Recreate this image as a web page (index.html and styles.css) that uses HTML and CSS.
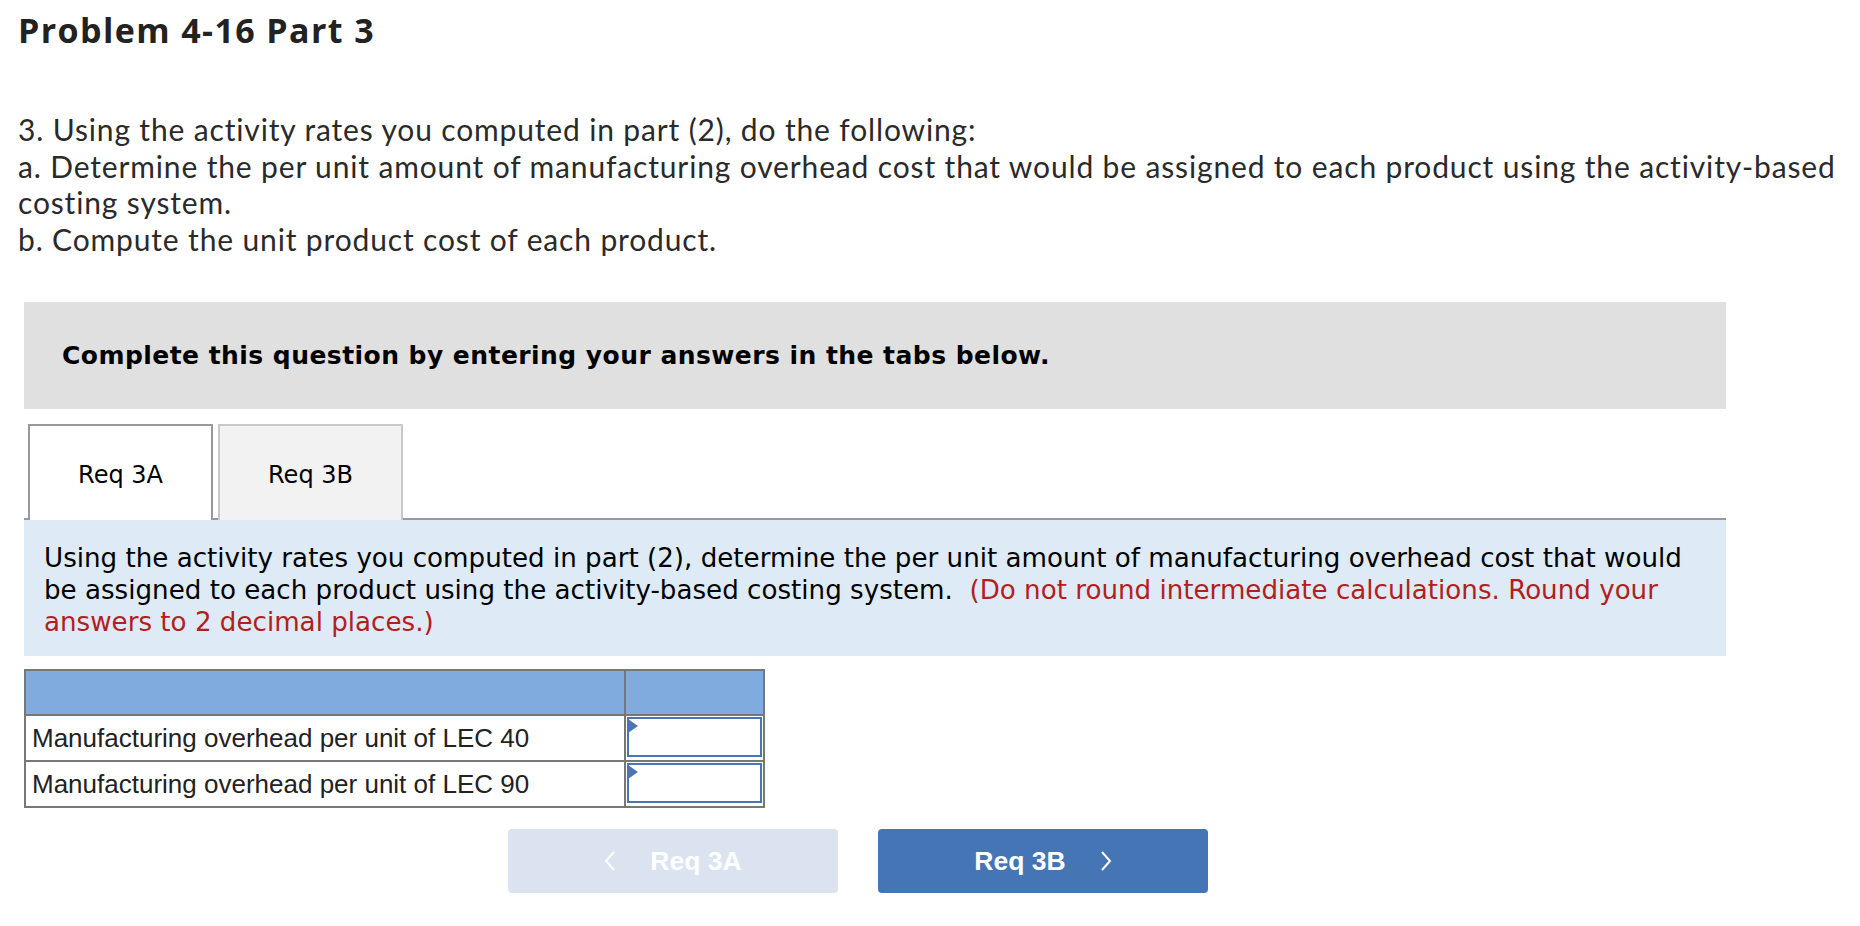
FILE: index.html
```html
<!DOCTYPE html>
<html>
<head>
<meta charset="utf-8">
<link rel="stylesheet" href="styles.css">
</head>
<body>
<h1 class="title">Problem 4-16 Part 3</h1>
<p class="question">3. Using the activity rates you computed in part (2), do the following:<br>a. Determine the per unit amount of manufacturing overhead cost that would be assigned to each product using the activity-based costing system.<br>b. Compute the unit product cost of each product.</p>

<div class="panel">
  <div class="instructions">Complete this question by entering your answers in the tabs below.</div>
  <div class="tabs">
    <div class="tab active">Req 3A</div>
    <div class="tab">Req 3B</div>
  </div>
  <div class="info">Using the activity rates you computed in part (2), determine the per unit amount of manufacturing overhead cost that would be assigned to each product using the activity-based costing system. &nbsp;<span class="red">(Do not round intermediate calculations. Round your answers to 2 decimal places.)</span></div>

  <div class="grid">
    <div class="cell head"></div>
    <div class="cell head"></div>
    <div class="cell label">Manufacturing overhead per unit of LEC 40</div>
    <div class="cell val"><div class="input"></div></div>
    <div class="cell label">Manufacturing overhead per unit of LEC 90</div>
    <div class="cell val"><div class="input"></div></div>
  </div>

  <div class="nav">
    <div class="btn prev">
      <svg width="12" height="20" viewBox="0 0 12 20"><polyline points="10,1 2,10 10,19" fill="none" stroke="#fff" stroke-width="2"/></svg>
      <span>Req 3A</span>
    </div>
    <div class="btn next">
      <span>Req 3B</span>
      <svg width="12" height="20" viewBox="0 0 12 20"><polyline points="2,1 10,10 2,19" fill="none" stroke="#fff" stroke-width="2"/></svg>
    </div>
  </div>
</div>
</body>
</html>
```

FILE: styles.css
```css
html, body {
  margin: 0;
  padding: 0;
  background: #fff;
}
body {
  padding: 0 8px 0 18px;
}
.title {
  font-family: "Open Sans", Lato, sans-serif;
  font-weight: 700;
  font-size: 34px;
  letter-spacing: 1.4px;
  line-height: 40px;
  color: #222;
  margin: 10px 0 0 0;
}
.question {
  font-family: Lato, "Open Sans", sans-serif;
  font-size: 30px;
  letter-spacing: 0.85px;
  line-height: 36.5px;
  color: #2a2a2a;
  margin: 61px 0 0 0;
}
.panel {
  margin: 45px 0 0 6px;
  width: 1702px;
}
.instructions {
  background: #e0e0e0;
  height: 107px;
  box-sizing: border-box;
  padding: 0 0 0 38px;
  display: flex;
  align-items: center;
  font-family: "DejaVu Sans", Verdana, sans-serif;
  font-weight: 700;
  font-size: 25px;
  letter-spacing: 0.45px;
  color: #000;
}
.tabs {
  margin-top: 15px;
  display: flex;
  gap: 5px;
  padding-left: 4px;
  border-bottom: 2px solid #999;
  height: 94px;
}
.tab {
  width: 185px;
  height: 96px;
  box-sizing: border-box;
  border: 2px solid #c8c8c8;
  border-bottom: none;
  background: #f2f2f2;
  display: flex;
  align-items: center;
  justify-content: center;
  padding-top: 4px;
  font-family: "DejaVu Sans", Verdana, sans-serif;
  font-size: 24px;
  color: #000;
}
.tab.active {
  background: #fff;
  border-color: #999;
  position: relative;
  z-index: 1;
}
.info {
  background: #deebf7;
  padding: 22px 20px 18px 20px;
  font-family: "DejaVu Sans", Verdana, sans-serif;
  font-size: 26.15px;
  line-height: 32px;
  color: #000;
}
.red {
  color: #b3201c;
}
.grid {
  margin-top: 13px;
  display: grid;
  grid-template-columns: 600px 139px;
  grid-template-rows: 45px 46px 46px;
  width: 741px;
  box-sizing: border-box;
  border-top: 2px solid #777;
  border-left: 2px solid #777;
  font-family: "Liberation Sans", Arial, sans-serif;
  font-size: 26px;
  color: #222;
}
.cell {
  border-right: 2px solid #777;
  border-bottom: 2px solid #777;
}
.cell.head {
  background: #80abdf;
}
.cell.label {
  display: flex;
  align-items: center;
  padding-left: 6px;
}
.input {
  position: relative;
  height: 40px;
  margin: 1px 1px 1px 1px;
  box-sizing: border-box;
  border: 2px solid #4a74b4;
  background: #fff;
}
.input::before {
  content: "";
  position: absolute;
  left: -1px;
  top: 0;
  border-top: 7px solid transparent;
  border-bottom: 7px solid transparent;
  border-left: 10px solid #4a74b4;
}
.nav {
  margin: 21px 0 0 484px;
  display: flex;
  gap: 40px;
}
.btn {
  width: 330px;
  height: 64px;
  border-radius: 4px;
  display: flex;
  align-items: center;
  justify-content: center;
  gap: 34px;
  font-family: "Liberation Sans", Arial, sans-serif;
  font-weight: 700;
  font-size: 26.5px;
  color: #fff;
}
.btn.prev {
  background: #dae3ef;
}
.btn.next {
  background: #4675b6;
}
```
